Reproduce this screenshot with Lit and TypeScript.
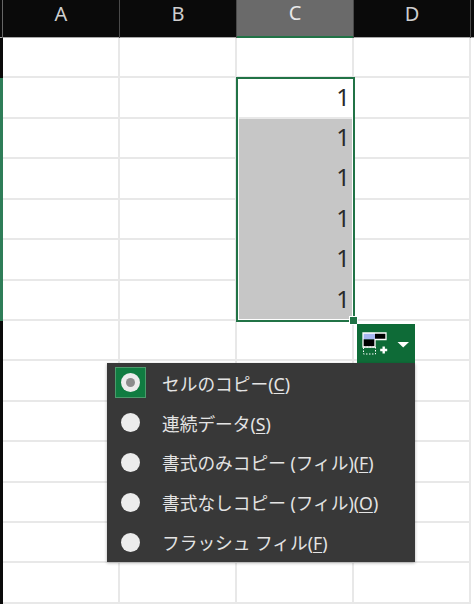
import { LitElement, html, css } from "lit";
import { customElement } from "lit/decorators.js";

const COLS = ["A", "B", "C", "D"];
const ROWS = 14;
const OPTIONS: [string, string, string][] = [
  ["セルのコピー(", "C", ")"],
  ["連続データ(", "S", ")"],
  ["書式のみコピー (フィル)(", "F", ")"],
  ["書式なしコピー (フィル)(", "O", ")"],
  ["フラッシュ フィル(", "F", ")"],
];

@customElement("app-root")
export class AppRoot extends LitElement {
  static styles = css`
    :host {
      display: block;
      width: 474px;
      height: 604px;
      overflow: hidden;
      background: #fff;
      position: relative;
      font-family: "Noto Sans", "Noto Sans CJK JP", sans-serif;
    }
    .head {
      display: grid;
      grid-template-columns: 3px repeat(4, 117px) 1fr;
      height: 38px;
      background: #0a0a0a;
      border-bottom: 1px solid #a9a9a9;
      box-sizing: border-box;
    }
    .hcell {
      display: flex;
      align-items: center;
      justify-content: center;
      color: #cfcfcf;
      font-size: 20px;
      padding-bottom: 13px;
      box-sizing: border-box;
      border-right: 1px solid #4a4a4a;
    }
    .hcell.corner {
      border-right: 1px solid #666;
    }
    .hcell.sel {
      background: #6a6a6a;
      color: #e8e8e8;
      box-shadow: inset 0 -2px 0 #217346;
      height: 38px;
    }
    .sheet {
      display: grid;
      grid-template-columns: 3px repeat(4, 117px) 1fr;
      grid-auto-rows: 40.43px;
    }
    .rh {
      grid-column: 1;
      background: #0a0a0a;
    }
    .rh.sel {
      background: #2f7d58;
    }
    .cell {
      box-sizing: border-box;
      border-right: 2px solid #e8e8e8;
      border-bottom: 2px solid #e8e8e8;
      display: flex;
      align-items: center;
      justify-content: flex-end;
      padding: 0 2px 3px 0;
      font-size: 24px;
      color: #2a2a2a;
    }
    .cell.fill {
      background: #c6c6c6;
      border-color: #c6c6c6;
    }
    .selection {
      grid-column: 4;
      grid-row: 2 / span 6;
      border: 2px solid #217346;
      margin: -1px -1px -1px -1px;
      box-sizing: border-box;
      position: relative;
      box-shadow: inset 0 0 0 1px #fff;
    }
    .handle {
      position: absolute;
      right: -5px;
      bottom: -5px;
      width: 7px;
      height: 7px;
      background: #217346;
      border: 1px solid #fff;
    }
    .smart {
      position: absolute;
      left: 357px;
      top: 324px;
      width: 58px;
      height: 39px;
      background: #0e6b37;
      display: flex;
      align-items: center;
      box-sizing: border-box;
      padding-left: 5px;
    }
    .menu {
      position: absolute;
      left: 107px;
      top: 363px;
      width: 308px;
      height: 199px;
      background: #383838;
      box-shadow: 0 1px 3px rgba(0, 0, 0, 0.3);
      display: flex;
      flex-direction: column;
      padding: 0 8px;
      box-sizing: border-box;
    }
    .item {
      height: 40px;
      display: flex;
      align-items: center;
      gap: 16px;
      color: #e4e4e4;
      font-size: 17.7px;
      white-space: nowrap;
    }
    .radio-box {
      width: 31px;
      height: 31px;
      display: flex;
      align-items: center;
      justify-content: center;
      box-sizing: border-box;
      flex: none;
    }
    .item.on .radio-box {
      background: #107c41;
      border: 1px solid #4c9a6c;
    }
    .radio {
      width: 19px;
      height: 19px;
      border-radius: 50%;
      background: #ececec;
      display: flex;
      align-items: center;
      justify-content: center;
    }
    .dot {
      width: 9px;
      height: 9px;
      border-radius: 50%;
      background: #8c8c8c;
    }
    u {
      text-underline-offset: 2px;
    }
  `;

  private cell(c: number, r: number) {
    const inC = c === 2 && r >= 1 && r <= 6;
    const fill = c === 2 && r >= 2 && r <= 6;
    return html`<div
      class="cell ${fill ? "fill" : ""}"
      style="grid-column:${c + 2};grid-row:${r + 1}"
    >
      ${inC ? "1" : ""}
    </div>`;
  }

  render() {
    const rows = Array.from({ length: ROWS }, (_, i) => i);
    return html`
      <div class="head">
        <div class="hcell corner"></div>
        ${COLS.map((c) => html`<div class="hcell ${c === "C" ? "sel" : ""}">${c}</div>`)}
        <div></div>
      </div>
      <div class="sheet">
        ${rows.map(
          (r) => html`
            <div class="rh ${r >= 1 && r <= 6 ? "sel" : ""}" style="grid-row:${r + 1}"></div>
            ${COLS.map((_, c) => this.cell(c, r))}
          `
        )}
        <div class="selection"><div class="handle"></div></div>
      </div>
      <div class="smart">
        <svg width="52" height="28" viewBox="0 0 52 28">
          <rect x="1" y="3" width="12" height="6.5" fill="#a9b8f2" />
          <rect x="13" y="3" width="11" height="6.5" fill="#000" />
          <rect x="1" y="9.5" width="12" height="7.5" fill="#000" />
          <path d="M1 17V3H24V9.5H13V17Z" fill="none" stroke="#fff" stroke-width="1.3" />
          <path d="M1.5 17h12v7h-12z" fill="none" stroke="#fff" stroke-width="1" stroke-dasharray="1.5 1.5" />
          <path d="M20.5 16.5h2.4v2.3h2.3v2.4h-2.3v2.3h-2.4v-2.3h-2.3v-2.4h2.3z" fill="#fff" />
          <path d="M35.5 12H47L41.2 17.5Z" fill="#fff" />
        </svg>
      </div>
      <div class="menu">
        ${OPTIONS.map(
          ([a, k, b], i) => html`
            <div class="item ${i === 0 ? "on" : ""}">
              <div class="radio-box">
                <div class="radio">${i === 0 ? html`<div class="dot"></div>` : ""}</div>
              </div>
              <span>${a}<u>${k}</u>${b}</span>
            </div>
          `
        )}
      </div>
    `;
  }
}
